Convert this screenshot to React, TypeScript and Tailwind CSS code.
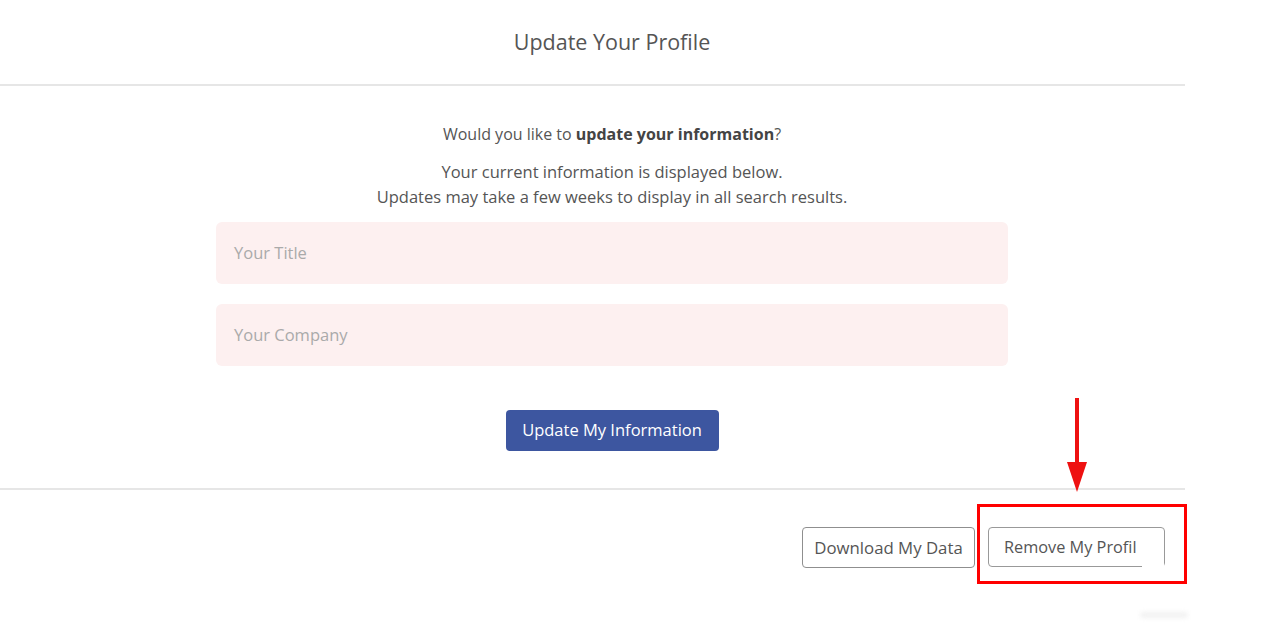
import React from "react";

export default function App() {
  const font = { fontFamily: "'Open Sans', Lato, 'Noto Sans', sans-serif" };
  return (
    <div className="relative w-[1261px] h-[636px] bg-white overflow-hidden text-[#555]" style={font}>
      <div className="w-[1224px] flex flex-col">
        <div className="h-[84px] flex items-center justify-center">
          <h1 className="text-[21.5px] text-[#555]">Update Your Profile</h1>
        </div>
        <div className="w-[1185px] h-[2px] bg-[#e6e6e6]" />
        <div className="flex flex-col items-center pt-[36px]">
          <p className="text-[16px] leading-[25px]">
            Would you like to <span className="font-bold text-[#444]">update your information</span>?
          </p>
          <p className="text-[16.5px] leading-[25px] mt-[12px] text-center">
            Your current information is displayed below.
            <br />
            Updates may take a few weeks to display in all search results.
          </p>
          <div className="mt-[13px] flex flex-col gap-[20px]">
            <div className="w-[792px] h-[62px] rounded-[6px] bg-[#fdf0f0] flex items-center pl-[18px] text-[16.5px] text-[#aaa]">
              Your Title
            </div>
            <div className="w-[792px] h-[62px] rounded-[6px] bg-[#fdf0f0] flex items-center pl-[18px] text-[16.5px] text-[#aaa]">
              Your Company
            </div>
          </div>
          <button className="mt-[44px] w-[213px] h-[41px] rounded-[4px] bg-[#3d56a0] text-white text-[16.5px]">
            Update My Information
          </button>
        </div>
        <div className="mt-[37px] w-[1185px] h-[2px] bg-[#e6e6e6]" />
        <div className="w-[1185px] flex justify-end pt-[37px] pr-[20px] gap-[13px]">
          <button className="w-[173px] h-[41px] rounded-[4px] border border-[#8f8f8f] text-[16.8px] text-[#555]">
            Download My Data
          </button>
          <div className="relative w-[177px] h-[40px] rounded-[4px] border border-[#999] text-[16.3px] text-[#555] flex items-center pl-[15px]">
            Remove My Profil
            <div className="absolute right-0 top-[10px] bottom-[-2px] w-[22px] bg-white" />
          </div>
        </div>
      </div>
      <div className="absolute left-[977px] top-[504px] w-[210px] h-[80px] border-[3px] border-[#ff0000]" />
      <div className="absolute left-[1075px] top-[398px] w-[4px] h-[66px] bg-[#ee1111]" />
      <svg className="absolute left-[1067px] top-[462px]" width="20" height="30" viewBox="0 0 20 30">
        <polygon points="0,0 20,0 10,30" fill="#ee1111" />
      </svg>
      <div className="absolute left-[1140px] top-[612px] w-[48px] h-[6px] rounded-full bg-[#f2f2f2] blur-[2px]" />
    </div>
  );
}
